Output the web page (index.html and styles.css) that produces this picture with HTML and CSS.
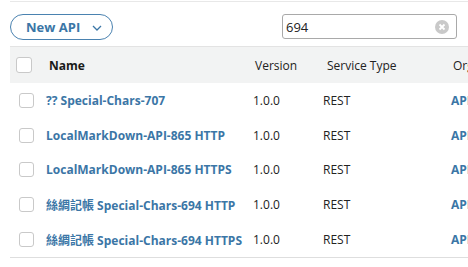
FILE: index.html
```html
<!DOCTYPE html>
<html>
<head>
<meta charset="utf-8">
<link rel="stylesheet" href="styles.css">
</head>
<body>
<div class="page">
  <div class="toolbar">
    <button class="new-btn">New API
      <svg class="chev" width="10" height="6" viewBox="0 0 10 6"><path d="M1 1 L5 5 L9 1" fill="none" stroke="#3b76a6" stroke-width="1.3"/></svg>
    </button>
    <div class="search">
      <span class="search-text">694</span>
      <span class="clear"><svg width="14" height="14" viewBox="0 0 14 14"><circle cx="7" cy="7" r="7" fill="#c9c9c9"/><path d="M4.5 4.5 L9.5 9.5 M9.5 4.5 L4.5 9.5" stroke="#fff" stroke-width="1.8"/></svg></span>
    </div>
  </div>
  <div class="table">
    <div class="head">
      <span class="cb big"></span>
      <span class="hname">Name</span>
      <span>Version</span>
      <span>Service Type</span>
      <span>Org</span>
    </div>
    <div class="row"><span class="cb"></span><a class="name">?? Special-Chars-707</a><span>1.0.0</span><span>REST</span><a class="org">API</a></div>
    <div class="row"><span class="cb"></span><a class="name">LocalMarkDown-API-865 HTTP</a><span>1.0.0</span><span>REST</span><a class="org">API</a></div>
    <div class="row"><span class="cb"></span><a class="name">LocalMarkDown-API-865 HTTPS</a><span>1.0.0</span><span>REST</span><a class="org">API</a></div>
    <div class="row"><span class="cb"></span><a class="name">絲綢記帳 Special-Chars-694 HTTP</a><span>1.0.0</span><span>REST</span><a class="org">API</a></div>
    <div class="row"><span class="cb"></span><a class="name">絲綢記帳 Special-Chars-694 HTTPS</a><span>1.0.0</span><span>REST</span><a class="org">API</a></div>
  </div>
</div>
</body>
</html>
```

FILE: styles.css
```css
* { box-sizing: border-box; }
html, body { margin: 0; padding: 0; background: #fff; overflow: hidden; }
body {
  font-family: "Open Sans", "Noto Sans CJK TC", sans-serif;
  font-size: 12px;
  color: #222;
  width: 468px;
  height: 267px;
}
.page { padding-left: 10px; padding-top: 1px; }
.toolbar {
  border-top: 1px solid #e8e8e8;
  display: flex;
  justify-content: space-between;
  align-items: flex-start;
  padding: 12px 11px 6px 0;
  border-bottom: 1px solid #e3e3e3;
}
.new-btn {
  width: 103px;
  height: 26px;
  border: 1px solid #4a82b0;
  border-radius: 13px;
  background: #fff;
  color: #3b76a6;
  font-family: "Open Sans", sans-serif;
  font-weight: 700;
  font-size: 13px;
  padding: 0 0 0 15px;
  display: flex;
  align-items: center;
  gap: 12px;
}
.chev { margin-top: 1px; }
.search {
  width: 175px;
  height: 25px;
  border: 1px solid #a9a9a9;
  border-radius: 3px;
  display: flex;
  align-items: center;
  justify-content: space-between;
  padding: 0 7px 0 3px;
}
.search-text { color: #222; font-size: 13px; }
.clear { display: flex; }
.table { width: 520px; border-bottom: 1px solid #dedede; margin-right: -60px; }
.head {
  background: #f2f3f3;
  height: 36px;
  display: grid;
  grid-template-columns: 33px 206px 72px 126px 1fr;
  align-items: center;
  padding-left: 6px;
  white-space: nowrap;
}
.hname { font-weight: 700; color: #1a1a1a; }
.row {
  height: 34.8px;
  display: grid;
  grid-template-columns: 27px 207px 70px 128px 1fr;
  align-items: center;
  padding-left: 9px;
  white-space: nowrap;
}
.cb {
  width: 15px;
  height: 15px;
  border: 1px solid #c9c9c9;
  border-radius: 3px;
  background: #fff;
}
.cb.big { width: 16px; height: 16px; }
.name, .org {
  color: #3b76a6;
  font-weight: 700;
  overflow: visible;
}
```
